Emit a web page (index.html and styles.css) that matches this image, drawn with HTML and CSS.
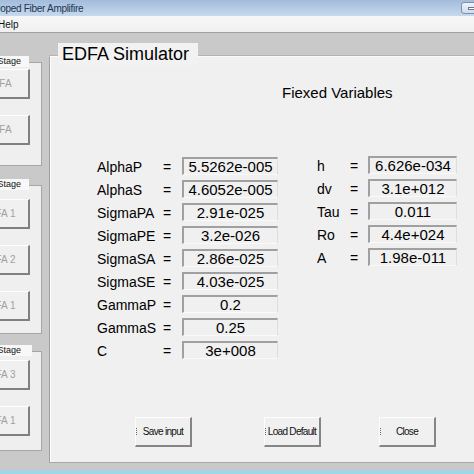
FILE: index.html
```html
<!DOCTYPE html>
<html>
<head>
<meta charset="utf-8">
<link rel="stylesheet" href="styles.css">
</head>
<body>
<div class="window">
  <div class="titlebar">
    <span class="title">Erbium Doped Fiber Amplifire</span>
    <span class="minbtn"><span class="minbar"></span></span>
  </div>
  <div class="menubar"><span class="menu">Help</span></div>
  <div class="client">
    <div class="sidebar">
      <div class="group g1">
        <div class="legend">Stage</div>
        <div class="sbtn b1">EDFA</div>
        <div class="sbtn b2">EDFA</div>
      </div>
      <div class="group g2">
        <div class="legend">Stage</div>
        <div class="sbtn b1">EDFA 1</div>
        <div class="sbtn b2">EDFA 2</div>
        <div class="sbtn b2">EDFA 1</div>
      </div>
      <div class="group g3">
        <div class="legend wide">Stage</div>
        <div class="sbtn b1">EDFA 3</div>
        <div class="sbtn b2">EDFA 1</div>
      </div>
    </div>
    <div class="panel">
      <div class="panel-title">EDFA Simulator</div>
      <div class="subtitle">Fiexed Variables</div>
      <div class="vars">
        <div class="col col-left">
          <div class="row"><span class="lbl">AlphaP</span><span class="eq">=</span><span class="box">5.5262e-005</span></div>
          <div class="row"><span class="lbl">AlphaS</span><span class="eq">=</span><span class="box">4.6052e-005</span></div>
          <div class="row"><span class="lbl">SigmaPA</span><span class="eq">=</span><span class="box">2.91e-025</span></div>
          <div class="row"><span class="lbl">SigmaPE</span><span class="eq">=</span><span class="box">3.2e-026</span></div>
          <div class="row"><span class="lbl">SigmaSA</span><span class="eq">=</span><span class="box">2.86e-025</span></div>
          <div class="row"><span class="lbl">SigmaSE</span><span class="eq">=</span><span class="box">4.03e-025</span></div>
          <div class="row"><span class="lbl">GammaP</span><span class="eq">=</span><span class="box">0.2</span></div>
          <div class="row"><span class="lbl">GammaS</span><span class="eq">=</span><span class="box">0.25</span></div>
          <div class="row"><span class="lbl">C</span><span class="eq">=</span><span class="box">3e+008</span></div>
        </div>
        <div class="col col-right">
          <div class="row"><span class="lbl">h</span><span class="eq">=</span><span class="box">6.626e-034</span></div>
          <div class="row"><span class="lbl">dv</span><span class="eq">=</span><span class="box">3.1e+012</span></div>
          <div class="row"><span class="lbl">Tau</span><span class="eq">=</span><span class="box">0.011</span></div>
          <div class="row"><span class="lbl">Ro</span><span class="eq">=</span><span class="box">4.4e+024</span></div>
          <div class="row"><span class="lbl">A</span><span class="eq">=</span><span class="box">1.98e-011</span></div>
        </div>
      </div>
      <div class="actions">
        <div class="btn">Save input</div>
        <div class="btn gap1">Load Default</div>
        <div class="btn gap2">Close</div>
      </div>
    </div>
  </div>
  <div class="strip"></div>
</div>
</body>
</html>
```
FILE: styles.css
```css
html, body {
  margin: 0;
  padding: 0;
}
body {
  width: 474px;
  height: 474px;
  overflow: hidden;
  font-family: "Liberation Sans", Arial, sans-serif;
  color: #111;
}
.window {
  display: flex;
  flex-direction: column;
  height: 474px;
}
.titlebar {
  flex: none;
  height: 16px;
  background: linear-gradient(#a2bcdb, #c7d9ed);
  display: flex;
  justify-content: space-between;
  align-items: center;
  overflow: hidden;
}
.title {
  font-size: 10px;
  letter-spacing: -0.3px;
  color: #1d3455;
  margin-left: -39px;
  white-space: nowrap;
}
.minbtn {
  align-self: flex-start;
  margin-top: 2px;
  margin-right: -9px;
  width: 22px;
  height: 12px;
  box-sizing: border-box;
  border: 1px solid #7b8fae;
  border-radius: 3px;
  background: linear-gradient(#eef3f9, #cfdbe9);
  display: flex;
}
.minbar {
  margin: 4px 0 0 6px;
  width: 9px;
  height: 3px;
  box-sizing: border-box;
  border: 1px solid #61769a;
  background: #fff;
}
.menubar {
  flex: none;
  height: 16px;
  background: linear-gradient(#f7f7f7, #f0f0f0);
  border-bottom: 1px solid #a0a0a0;
  display: flex;
  align-items: center;
  font-size: 10px;
}
.menu {
  margin-left: -2px;
}
.client {
  flex: 1;
  display: flex;
  background: #c9c9c9;
  min-height: 0;
}
.strip {
  flex: none;
  height: 4px;
  background: #a4d4e8;
}
.sidebar {
  flex: none;
  width: 42px;
  display: flex;
  flex-direction: column;
}
.group {
  margin-left: -40px;
  width: 82px;
  box-sizing: border-box;
  border: 1px solid #a6a6a6;
  background: #efefef;
  display: flex;
  flex-direction: column;
  align-items: flex-start;
  flex: none;
}
.g1 { margin-top: 29px; height: 104px; }
.g2 { margin-top: 19px; height: 149px; }
.g3 { margin-top: 17px; height: 100px; }
.legend {
  flex: none;
  margin-top: -7px;
  height: 11px;
  width: 68px;
  box-sizing: border-box;
  padding-right: 8px;
  text-align: right;
  font-size: 9px;
  line-height: 11px;
  background: #f8f8f8;
  color: #111;
}
.legend.wide { width: 71px; padding-right: 11px; }
.sbtn {
  flex: none;
  margin-left: 8px;
  width: 61px;
  height: 30px;
  box-sizing: border-box;
  border-top: 1px solid #fff;
  border-right: 2px solid #808080;
  border-bottom: 2px solid #808080;
  background: #f0f0f0;
  font-size: 10px;
  color: #a0a0a0;
  display: flex;
  align-items: center;
  justify-content: center;
}
.g1 .b1 { margin-top: 2px; }
.g2 .b1 { margin-top: 9px; }
.g3 .b1 { margin-top: 4px; }
.b2 { margin-top: 16px; }
.panel {
  flex: 1;
  margin: 23px -10px 7px 7px;
  border-left: 1px solid #a0a0a0;
  border-top: 1px solid #fbfbfb;
  border-bottom: 1px solid #a8a8a8;
  background: #f0f0f0;
  box-shadow: inset 1px 0 #fff, 0 -1px #b4b4b4;
  display: flex;
  flex-direction: column;
  align-items: flex-start;
}
.panel-title {
  margin-top: -14px;
  margin-left: 8px;
  width: 140px;
  height: 22px;
  box-sizing: border-box;
  padding: 1px 0 0 4px;
  font-size: 18px;
  line-height: 21px;
  background: #f2f2f2;
  color: #000;
  white-space: nowrap;
}
.subtitle {
  margin-top: 19px;
  margin-left: 232px;
  font-size: 15px;
  line-height: 17px;
  color: #000;
  white-space: nowrap;
}
.vars {
  margin-top: 55px;
  display: flex;
  align-items: flex-start;
}
.col {
  display: flex;
  flex-direction: column;
}
.col-left {
  margin-left: 47px;
  margin-top: 1px;
}
.col-right {
  margin-left: 39px;
}
.row {
  display: flex;
  height: 23px;
  align-items: flex-start;
}
.lbl {
  font-size: 14px;
  line-height: 18px;
  padding-top: 1px;
  color: #000;
  white-space: nowrap;
}
.eq {
  font-size: 14px;
  line-height: 18px;
  padding-top: 1px;
  color: #000;
}
.col-left .lbl { width: 66px; }
.col-left .eq { width: 19px; }
.col-right .lbl { width: 33px; }
.col-right .eq { width: 18px; }
.box {
  height: 18px;
  box-sizing: border-box;
  border-top: 2px solid #a0a0a0;
  border-left: 2px solid #a0a0a0;
  border-right: 1px solid #dedede;
  border-bottom: 1px solid #fafafa;
  background: #f0f0f0;
  font-size: 15px;
  line-height: 15px;
  text-align: center;
  color: #000;
}
.col-left .box { width: 96px; }
.col-right .box { width: 89px; }
.actions {
  margin-top: 53px;
  margin-left: 85px;
  display: flex;
}
.btn {
  width: 57px;
  height: 30px;
  box-sizing: border-box;
  border-top: 1px solid #fcfcfc;
  border-left: 1px solid #fcfcfc;
  border-right: 2px solid #858585;
  border-bottom: 2px solid #858585;
  background: #f0f0f0;
  font-size: 10px;
  letter-spacing: -0.7px;
  color: #111;
  display: flex;
  align-items: center;
  white-space: nowrap;
}
.btn::before {
  content: "";
  width: 1px;
  height: 7px;
  margin-right: auto;
  background: repeating-linear-gradient(#666 0 1px, transparent 1px 2px);
}
.btn::after {
  content: "";
  width: 1px;
  margin-left: auto;
}
.gap1 { margin-left: 72px; }
.gap2 { margin-left: 58px; }
```
